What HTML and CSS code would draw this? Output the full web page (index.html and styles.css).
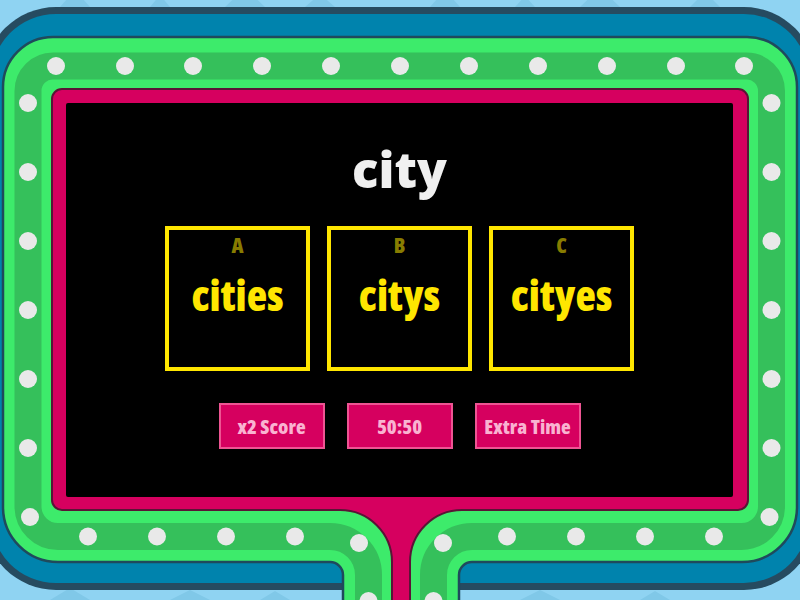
FILE: index.html
```html
<!DOCTYPE html>
<html lang="en">
<head>
<meta charset="utf-8">
<title>city – quiz</title>
<link rel="stylesheet" href="styles.css">
</head>
<body>
<div class="stage">
  <svg class="frame" viewBox="0 0 800 600" width="800" height="600" aria-hidden="true">
    <rect width="800" height="600" fill="#8fd3f2"/>
    <g fill="#80c8e8">
      <polygon points="60,7 75,-10 90,7"/>
      <polygon points="150,7 160,-5 170,7"/>
      <polygon points="225,7 245,-12 265,7"/>
      <polygon points="305,7 320,-6 335,7"/>
      <polygon points="430,7 445,-10 460,7"/>
      <polygon points="515,7 525,-4 535,7"/>
      <polygon points="580,7 600,-12 620,7"/>
      <polygon points="690,7 705,-8 720,7"/>
      <polygon points="50,600 70,588 90,600"/>
      <polygon points="170,600 190,590 210,600"/>
      <polygon points="260,600 275,591 290,600"/>
      <polygon points="520,600 540,590 560,600"/>
      <polygon points="640,600 655,591 670,600"/>
    </g>
    <rect x="-16" y="7" width="832" height="583" rx="72" fill="#264b60"/>
    <rect x="-9" y="14" width="818" height="569" rx="65" fill="#0083ad"/>
    <path d="M 53,37 H 747 A 50 50 0 0 1 797 87 V 507 A 55 55 0 0 1 742 562 H 472 A 13 13 0 0 0 459 575 V 612 H 343 V 575 A 13 13 0 0 0 330 562 H 58 A 55 55 0 0 1 3 507 V 87 A 50 50 0 0 1 53 37 Z" fill="#3deb6b" stroke="#1f4a5c" stroke-width="2.5"/>
    <path d="M 368.5,612 V 575 A 38.5 38.5 0 0 0 330 536.5 H 58 A 30 30 0 0 1 28 506.5 V 91 A 25 25 0 0 1 53 66 H 746.5 A 25 25 0 0 1 771.5 91 V 506.5 A 30 30 0 0 1 741.5 536.5 H 472 A 38.5 38.5 0 0 0 433.5 575 V 612" fill="none" stroke="#35c05b" stroke-width="27"/>
    <g fill="#e9e9e9">
      <circle cx="56" cy="66" r="9"/><circle cx="125" cy="66" r="9"/><circle cx="193" cy="66" r="9"/>
      <circle cx="262" cy="66" r="9"/><circle cx="331" cy="66" r="9"/><circle cx="400" cy="66" r="9"/>
      <circle cx="469" cy="66" r="9"/><circle cx="538" cy="66" r="9"/><circle cx="607" cy="66" r="9"/>
      <circle cx="676" cy="66" r="9"/><circle cx="744" cy="66" r="9"/>
      <circle cx="28" cy="103" r="9"/><circle cx="28" cy="172" r="9"/><circle cx="28" cy="241" r="9"/>
      <circle cx="28" cy="310" r="9"/><circle cx="28" cy="379" r="9"/><circle cx="28" cy="448" r="9"/>
      <circle cx="30" cy="517" r="9"/>
      <circle cx="771.5" cy="103" r="9"/><circle cx="771.5" cy="172" r="9"/><circle cx="771.5" cy="241" r="9"/>
      <circle cx="771.5" cy="310" r="9"/><circle cx="771.5" cy="379" r="9"/><circle cx="771.5" cy="448" r="9"/>
      <circle cx="769.5" cy="517" r="9"/>
      <circle cx="88" cy="536.5" r="9"/><circle cx="157" cy="536.5" r="9"/><circle cx="226" cy="536.5" r="9"/>
      <circle cx="295" cy="536.5" r="9"/><circle cx="359" cy="543" r="9"/><circle cx="368.5" cy="601" r="9"/>
      <circle cx="714" cy="536.5" r="9"/><circle cx="645" cy="536.5" r="9"/><circle cx="576" cy="536.5" r="9"/>
      <circle cx="507" cy="536.5" r="9"/><circle cx="443" cy="543" r="9"/><circle cx="433.5" cy="601" r="9"/>
    </g>
    <path d="M 62,89 H 738 A 10 10 0 0 1 748 99 V 500 A 10 10 0 0 1 738 510 H 462 A 52 52 0 0 0 410 562 V 612 H 392 V 562 A 52 52 0 0 0 340 510 H 62 A 10 10 0 0 1 52 500 V 99 A 10 10 0 0 1 62 89 Z" fill="#d6005f" stroke="#5a1436" stroke-width="2"/>
  </svg>

  <main class="screen">
    <h1 class="prompt">city</h1>
    <div class="answers">
      <div class="answer"><span class="answer-key">A</span><span class="answer-text">cities</span></div>
      <div class="answer"><span class="answer-key">B</span><span class="answer-text">citys</span></div>
      <div class="answer"><span class="answer-key">C</span><span class="answer-text">cityes</span></div>
    </div>
    <div class="powerups">
      <button class="powerup" type="button">x2 Score</button>
      <button class="powerup" type="button">50:50</button>
      <button class="powerup" type="button">Extra Time</button>
    </div>
  </main>
</div>
</body>
</html>
```

FILE: styles.css
```css
html, body {
  margin: 0;
  padding: 0;
}

body {
  width: 800px;
  height: 600px;
  overflow: hidden;
  background: #8fd3f2;
  font-family: "Open Sans", "Liberation Sans", sans-serif;
}

.stage {
  display: grid;
  width: 800px;
  height: 600px;
}

.frame,
.screen {
  grid-area: 1 / 1;
}

.frame {
  display: block;
}

.screen {
  align-self: start;
  justify-self: start;
  margin: 103px 0 0 66px;
  width: 667px;
  height: 394px;
  box-sizing: border-box;
  padding-top: 42px;
  background: #000;
  border-radius: 2px;
  display: flex;
  flex-direction: column;
  align-items: center;
}

.prompt {
  margin: 0;
  font-size: 49px;
  line-height: 48px;
  font-weight: 800;
  color: #f0f0f0;
}

.answers {
  display: flex;
  gap: 17px;
  margin-top: 33px;
}

.answer {
  width: 145px;
  height: 145px;
  box-sizing: border-box;
  border: 4px solid #ffe600;
  padding-top: 5px;
  display: flex;
  flex-direction: column;
  align-items: center;
}

.answer-key {
  font-size: 21px;
  line-height: 20px;
  font-weight: 800;
  font-stretch: 75%;
  color: #877c00;
}

.answer-text {
  margin-top: 19px;
  font-size: 42px;
  line-height: 42px;
  font-weight: 800;
  font-stretch: 75%;
  color: #ffe600;
}

.powerups {
  display: flex;
  gap: 22px;
  margin-top: 32px;
}

.powerup {
  width: 106px;
  height: 46px;
  box-sizing: border-box;
  margin: 0;
  padding: 0;
  background: #d6005f;
  border: 2px solid #ee5593;
  border-radius: 0;
  color: #f9b3d1;
  font-family: inherit;
  font-size: 20px;
  font-weight: 800;
  font-stretch: 75%;
  display: flex;
  align-items: center;
  justify-content: center;
}
```
